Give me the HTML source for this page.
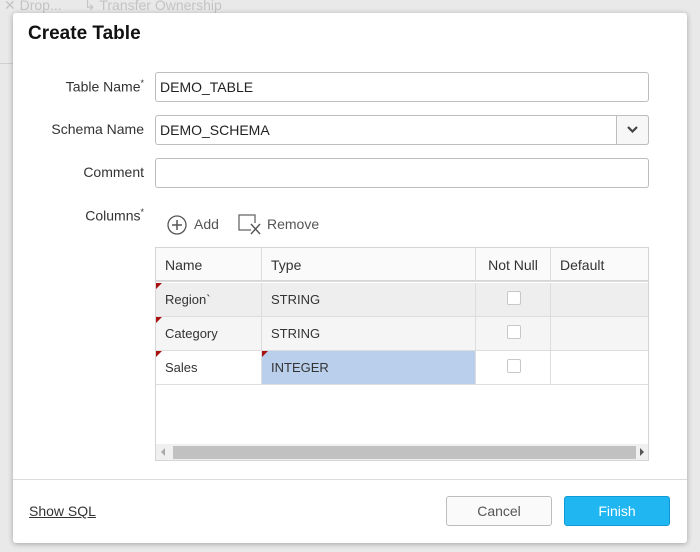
<!DOCTYPE html>
<html><head><style>
*{box-sizing:border-box;margin:0;padding:0}
body{width:700px;height:552px;background:#e9e9e9;font-family:"Liberation Sans",sans-serif;position:relative;overflow:hidden;color:#333}
.a{position:absolute}
.tb{color:#c4c4c4;font-size:14px;top:-3px}
.dlg{left:13px;top:13px;width:674px;height:530px;background:#fff;border-radius:3px;box-shadow:0 1px 6px rgba(0,0,0,.3)}
.lbl{font-size:14px;color:#333;text-align:right;width:132px;left:12px}
.inp{left:155px;width:494px;height:30px;border:1px solid #bdbdbd;border-radius:3px;font-size:14px;padding:6px 4px;color:#222}
.cell{position:absolute;font-size:13px;padding-left:9px;line-height:34px;border-right:1px solid #ddd;border-bottom:1px solid #ddd}
.cb{position:absolute;width:14px;height:14px;border:1px solid #c8c8c8;border-radius:2px;background:#fff}
.tri{position:absolute;width:0;height:0;border-top:6px solid #a11;border-right:6px solid transparent}
</style></head><body>
<div class="a tb" style="left:4px">✕ Drop...</div>
<div class="a tb" style="left:84px">↳ Transfer Ownership</div>
<div class="a" style="left:0;top:63px;width:13px;height:1px;background:#d0d0d0"></div>
<div class="a dlg"></div>
<div class="a" style="left:28px;top:23px;font-size:19px;font-weight:bold;color:#111">Create Table</div>
<div class="a lbl" style="top:78px">Table Name<sup style="font-size:9px">*</sup></div>
<div class="a inp" style="top:72px">DEMO_TABLE</div>
<div class="a lbl" style="top:121px">Schema Name</div>
<div class="a inp" style="top:115px">DEMO_SCHEMA</div>
<div class="a" style="left:616px;top:115px;width:33px;height:30px;border:1px solid #bdbdbd;border-radius:0 3px 3px 0;background:#f7f7f7"></div>
<svg class="a" style="left:626px;top:125px" width="13" height="10"><path d="M2 2l4.5 4.5L11 2" stroke="#444" stroke-width="2.2" fill="none"/></svg>
<div class="a lbl" style="top:164px">Comment</div>
<div class="a inp" style="top:158px"></div>
<div class="a lbl" style="top:207px">Columns<sup style="font-size:9px">*</sup></div>
<svg class="a" style="left:166px;top:214px" width="22" height="22"><circle cx="11" cy="11" r="9" stroke="#555" stroke-width="1.3" fill="none"/><path d="M11 6v10M6 11h10" stroke="#555" stroke-width="1.5"/></svg>
<div class="a" style="left:194px;top:216px;font-size:14px;color:#555">Add</div>
<svg class="a" style="left:237px;top:212px" width="26" height="24"><path d="M14 18H2V3h16v8" stroke="#666" stroke-width="1.3" fill="none"/><path d="M14 12l9 10M23 12l-9 10" stroke="#555" stroke-width="1.4"/></svg>
<div class="a" style="left:267px;top:216px;font-size:14px;color:#555">Remove</div>
<div class="a" style="left:155px;top:247px;width:494px;height:214px;border:1px solid #d5d5d5;background:#fff;overflow:hidden">
 <div style="position:absolute;left:0;top:0;width:494px;height:34px;background:#fafafa;border-bottom:2px solid #d5d5d5"></div>
 <div class="cell" style="left:0;top:0;width:106px;height:34px;font-size:14px">Name</div>
 <div class="cell" style="left:106px;top:0;width:214px;height:34px;font-size:14px">Type</div>
 <div class="cell" style="left:320px;top:0;width:75px;height:34px;font-size:14px;text-align:center;padding:0">Not Null</div>
 <div class="cell" style="left:395px;top:0;width:99px;height:34px;font-size:14px;border-right:0">Default</div>
 <div style="position:absolute;left:0;top:35px;width:494px;height:34px;background:#eeeeee"></div>
 <div style="position:absolute;left:0;top:69px;width:494px;height:34px;background:#f5f5f5"></div>
 <div style="position:absolute;left:106px;top:103px;width:214px;height:34px;background:#b9cfeb"></div>
 <div class="cell" style="left:0;top:35px;width:106px;height:34px">Region`</div>
 <div class="cell" style="left:106px;top:35px;width:214px;height:34px">STRING</div>
 <div class="cell" style="left:320px;top:35px;width:75px;height:34px"></div>
 <div class="cell" style="left:395px;top:35px;width:99px;height:34px;border-right:0"></div>
 <div class="cell" style="left:0;top:69px;width:106px;height:34px">Category</div>
 <div class="cell" style="left:106px;top:69px;width:214px;height:34px">STRING</div>
 <div class="cell" style="left:320px;top:69px;width:75px;height:34px"></div>
 <div class="cell" style="left:395px;top:69px;width:99px;height:34px;border-right:0"></div>
 <div class="cell" style="left:0;top:103px;width:106px;height:34px">Sales</div>
 <div class="cell" style="left:106px;top:103px;width:214px;height:34px">INTEGER</div>
 <div class="cell" style="left:320px;top:103px;width:75px;height:34px"></div>
 <div class="cell" style="left:395px;top:103px;width:99px;height:34px;border-right:0"></div>
 <div class="tri" style="left:0;top:35px"></div><div class="tri" style="left:0;top:69px"></div><div class="tri" style="left:0;top:103px"></div><div class="tri" style="left:106px;top:103px"></div>
 <div class="cb" style="left:351px;top:43px"></div><div class="cb" style="left:351px;top:77px"></div><div class="cb" style="left:351px;top:111px"></div>
 <div style="position:absolute;left:0;top:196px;width:494px;height:17px;background:#f0f0f0"></div>
 <div style="position:absolute;left:17px;top:198px;width:463px;height:13px;background:#c1c1c1"></div>
 <div style="position:absolute;left:5px;top:200px;width:0;height:0;border-right:4px solid #aaa;border-top:4px solid transparent;border-bottom:4px solid transparent"></div>
 <div style="position:absolute;left:484px;top:200px;width:0;height:0;border-left:4px solid #555;border-top:4px solid transparent;border-bottom:4px solid transparent"></div>
</div>
<div class="a" style="left:13px;top:479px;width:674px;height:1px;background:#dcdcdc"></div>
<div class="a" style="left:29px;top:503px;font-size:14px;text-decoration:underline;color:#333">Show SQL</div>
<div class="a" style="left:446px;top:496px;width:106px;height:30px;border:1px solid #bdbdbd;border-radius:3px;background:#fafafa;font-size:14px;color:#555;text-align:center;line-height:28px">Cancel</div>
<div class="a" style="left:564px;top:496px;width:106px;height:30px;border:1px solid #0f9ad6;border-radius:3px;background:#1fb6f1;font-size:14px;color:#fff;text-align:center;line-height:28px">Finish</div>
</body></html>
